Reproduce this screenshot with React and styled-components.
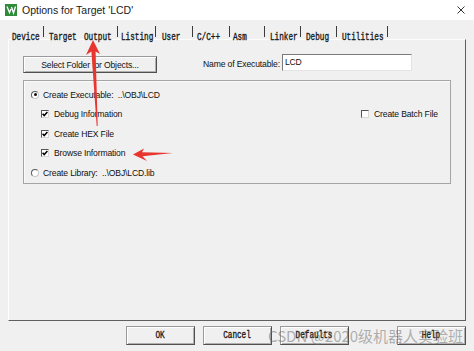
import React from 'react';
import styled, { createGlobalStyle } from 'styled-components';

const Global = createGlobalStyle`
  html, body { margin: 0; padding: 0; background: #f0f0f0; }
  body { width: 474px; height: 351px; overflow: hidden; }
`;

const Window = styled.div`
  position: relative;
  width: 474px;
  height: 351px;
  background: #f0f0f0;
  display: flex;
  flex-direction: column;
  font-family: "Liberation Sans", Arial, sans-serif;
  color: #000;
  overflow: hidden;
`;

const TitleBar = styled.div`
  height: 20px;
  flex: 0 0 20px;
  background: #fff;
  display: flex;
  align-items: center;
  padding-left: 5px;
`;

const TitleText = styled.div`
  margin-left: 5px;
  font-size: 10.5px;
  color: #1a1a1a;
  white-space: nowrap;
`;

const CloseBtn = styled.div`
  margin-left: auto;
  width: 27px;
  height: 20px;
  display: flex;
  align-items: center;
  justify-content: center;
`;

const Body = styled.div`
  flex: 1;
  display: flex;
  flex-direction: column;
  padding: 0 8px;
`;

const TabStrip = styled.div`
  height: 19px;
  flex: 0 0 19px;
  box-sizing: border-box;
  padding-top: 6px;
  display: flex;
  align-items: flex-start;
`;

const Tab = styled.div`
  width: ${p => p.$w}px;
  height: 11px;
  box-sizing: border-box;
  padding-left: ${p => p.$off}px;
  border-right: 1px solid ${p => (p.$sep ? '#3a3a3a' : 'transparent')};
  overflow: visible;
  white-space: nowrap;
`;

const MonoLabel = styled.span`
  display: inline-block;
  font-family: "Liberation Mono", "Courier New", monospace;
  font-weight: normal;
  -webkit-text-stroke: 0.35px #1a1a1a;
  font-size: 10px;
  line-height: 11px;
  color: #1a1a1a;
  transform: scaleX(0.77);
  transform-origin: ${p => (p.$center ? 'center' : 'left')};
  white-space: nowrap;
`;

const Panel = styled.div`
  flex: 0 0 282px;
  height: 282px;
  box-sizing: border-box;
  border-top: 1px solid #fdfdfd;
  border-left: 1px solid #fdfdfd;
  border-right: 1px solid #5f5f5f;
  border-bottom: 1px solid #5f5f5f;
  padding: 16px 0 0 14px;
  display: flex;
  flex-direction: column;
`;

const TopRow = styled.div`
  display: flex;
  align-items: flex-start;
`;

const PushButton = styled.div`
  width: ${p => p.$w}px;
  height: ${p => p.$h}px;
  box-sizing: border-box;
  background: #f0f0f0;
  border: 1px solid #9a9a9a;
  border-right-color: #505050;
  border-bottom-color: #505050;
  box-shadow: inset 1px 1px 0 #fff, inset -1px -1px 0 #b0b0b0;
  display: flex;
  align-items: center;
  justify-content: center;
  overflow: hidden;
`;

const Text = styled.span`
  font-size: 8.6px;
  letter-spacing: -0.15px;
  line-height: 10px;
  white-space: nowrap;
  color: #111;
`;

const FieldLabel = styled(Text)`
  margin-left: 46px;
  margin-top: 3px;
`;

const TextField = styled.div`
  margin-left: 2px;
  margin-top: -2px;
  width: 130px;
  height: 17px;
  box-sizing: border-box;
  background: #fff;
  border: 1px solid #e3e3e3;
  border-top-color: #7a7a7a;
  border-left-color: #7a7a7a;
  padding: 2px 0 0 2px;
  display: flex;
  align-items: flex-start;
`;

const GroupBox = styled.div`
  margin-top: 7px;
  width: 428px;
  height: 104px;
  box-sizing: border-box;
  border: 1px solid #a5a5a5;
  box-shadow: inset 1px 1px 0 #fbfbfb;
  padding: 4px 0 0 7px;
  display: grid;
  grid-template-columns: 330px 1fr;
`;

const Column = styled.div`
  display: flex;
  flex-direction: column;
  margin-top: ${p => p.$top || 0}px;
`;

const OptionRow = styled.div`
  height: 19.5px;
  display: flex;
  align-items: center;
  padding-left: ${p => p.$indent || 0}px;
`;

const Radio = styled.span`
  position: relative;
  width: 8px;
  height: 8px;
  box-sizing: border-box;
  border-radius: 50%;
  background: #fff;
  border: 1px solid #c8c8c8;
  border-top-color: #5a5a5a;
  border-left-color: #5a5a5a;
  margin-right: 4px;
  flex: 0 0 8px;
  &::after {
    content: '';
    display: ${p => (p.$on ? 'block' : 'none')};
    position: absolute;
    left: 1.5px;
    top: 1.5px;
    width: 3px;
    height: 3px;
    border-radius: 50%;
    background: #111;
  }
`;

const Box = styled.span`
  width: 8px;
  height: 8px;
  box-sizing: border-box;
  background: #fff;
  border: 1px solid #d8d8d8;
  border-top-color: #555;
  border-left-color: #555;
  margin-right: 5px;
  flex: 0 0 8px;
  display: flex;
  align-items: center;
  justify-content: center;
`;

const ButtonBar = styled.div`
  flex: 1;
  display: flex;
  align-items: flex-start;
  padding: 5px 0 0 118px;
  gap: 8px;
`;

const HelpSlot = styled.div`
  margin-left: auto;
`;

const Annotations = styled.svg`
  position: absolute;
  left: 0;
  top: 0;
  width: 474px;
  height: 351px;
  pointer-events: none;
`;

const Watermark = styled.div`
  position: absolute;
  left: 268px;
  top: 327px;
  font-family: "Noto Sans CJK SC", "Noto Sans", sans-serif;
  font-size: 15px;
  line-height: 18px;
  color: rgba(105, 105, 105, 0.5);
  white-space: nowrap;
  pointer-events: none;
`;

function CheckBox({ on }) {
  return (
    <Box>
      {on && (
        <svg width="6" height="6" viewBox="0 0 6 6">
          <polyline points="0.6,2.8 2.2,4.6 5.4,0.9" fill="none" stroke="#000" strokeWidth="1.5" />
        </svg>
      )}
    </Box>
  );
}

const tabs = [
  { label: 'Device', w: 36, off: 4 },
  { label: 'Target', w: 36, off: 5 },
  { label: 'Output', w: 38, off: 4, active: true },
  { label: 'Listing', w: 38, off: 3 },
  { label: 'User', w: 37, off: 6 },
  { label: 'C/C++', w: 37, off: 4 },
  { label: 'Asm', w: 35, off: 3 },
  { label: 'Linker', w: 36, off: 5 },
  { label: 'Debug', w: 36, off: 5 },
  { label: 'Utilities', w: 51, off: 5 },
];

export default function App() {
  return (
    <>
      <Global />
      <Window>
        <TitleBar>
          <svg width="12" height="12" viewBox="0 0 12 12">
            <rect x="0" y="0" width="12" height="12" fill="#2e8b3a" />
            <path d="M2 2.5 L4.5 8.5 L6 5 M6.5 3 L8.5 9 L10.5 2.5" fill="none" stroke="#fff" strokeWidth="1.3" />
          </svg>
          <TitleText>Options for Target 'LCD'</TitleText>
          <CloseBtn>
            <svg width="8" height="8" viewBox="0 0 8 8">
              <path d="M0.5 0.5 L7.5 7.5 M7.5 0.5 L0.5 7.5" stroke="#333" strokeWidth="1" />
            </svg>
          </CloseBtn>
        </TitleBar>
        <Body>
          <TabStrip>
            {tabs.map((t, i) => (
              <Tab key={t.label} $w={t.w} $off={t.off} $sep={!(tabs[i + 1] && tabs[i + 1].active)}>
                <MonoLabel>{t.label}</MonoLabel>
              </Tab>
            ))}
          </TabStrip>
          <Panel>
            <TopRow>
              <PushButton $w={134} $h={17}>
                <Text>Select Folder for Objects...</Text>
              </PushButton>
              <FieldLabel>Name of Executable:</FieldLabel>
              <TextField>
                <Text>LCD</Text>
              </TextField>
            </TopRow>
            <GroupBox>
              <Column>
                <OptionRow>
                  <Radio $on />
                  <Text>Create Executable:&nbsp; ..\OBJ\LCD</Text>
                </OptionRow>
                <OptionRow $indent={10}>
                  <CheckBox on />
                  <Text>Debug Information</Text>
                </OptionRow>
                <OptionRow $indent={10}>
                  <CheckBox on />
                  <Text>Create HEX File</Text>
                </OptionRow>
                <OptionRow $indent={10}>
                  <CheckBox on />
                  <Text>Browse Information</Text>
                </OptionRow>
                <OptionRow>
                  <Radio />
                  <Text>Create Library:&nbsp; ..\OBJ\LCD.lib</Text>
                </OptionRow>
              </Column>
              <Column $top={19}>
                <OptionRow>
                  <CheckBox />
                  <Text>Create Batch File</Text>
                </OptionRow>
              </Column>
            </GroupBox>
          </Panel>
          <ButtonBar>
            <PushButton $w={69} $h={19}><MonoLabel $center>OK</MonoLabel></PushButton>
            <PushButton $w={69} $h={19}><MonoLabel $center>Cancel</MonoLabel></PushButton>
            <PushButton $w={69} $h={19}><MonoLabel $center>Defaults</MonoLabel></PushButton>
            <HelpSlot>
              <PushButton $w={69} $h={19}><MonoLabel $center>Help</MonoLabel></PushButton>
            </HelpSlot>
          </ButtonBar>
        </Body>
        <Annotations viewBox="0 0 474 351">
          <polygon
            points="93,40 100,54 95.6,51.5 97.7,126 96.7,126 91.4,51.5 86,55"
            fill="#e8352f"
          />
          <polygon
            points="133,154.5 144,148.5 142,152.3 173,153 142.5,156.2 147,161"
            fill="#e8352f"
          />
        </Annotations>
        <Watermark>CSDN @2020级机器人实验班</Watermark>
      </Window>
    </>
  );
}
